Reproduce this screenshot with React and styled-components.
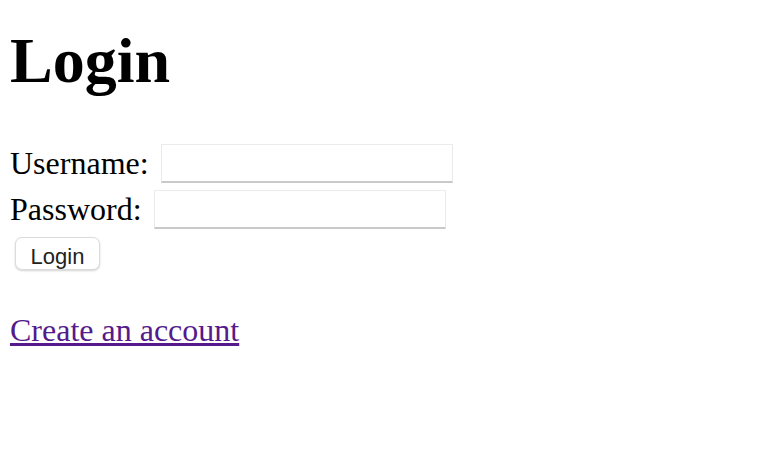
import React from "react";
import styled, { createGlobalStyle } from "styled-components";

const Global = createGlobalStyle`
  html, body { margin: 0; padding: 0; background: #fff; }
  body { font-family: "Liberation Serif", "Times New Roman", serif; color: #000; }
`;

const Page = styled.div`
  padding: 0 10px;
`;

const Title = styled.h1`
  margin: 24px 0 0;
  font-size: 64px;
  line-height: 74px;
  font-weight: bold;
`;

const Form = styled.form`
  margin-top: 46px;
  display: flex;
  flex-direction: column;
  align-items: flex-start;
`;

const Row = styled.div`
  display: flex;
  align-items: center;
  gap: 12.5px;
  margin-bottom: ${(p) => p.$mb}px;
`;

const Label = styled.label`
  font-size: 32px;
  line-height: 37px;
`;

const Input = styled.input`
  box-sizing: border-box;
  width: 292px;
  height: 39px;
  border: 1px solid #ebebeb;
  border-bottom: 2px solid #c9c9c9;
  background: #fff;
  padding: 0 6px;
  font-size: 22px;
  outline: none;
`;

const Button = styled.button`
  box-sizing: border-box;
  margin-left: 5px;
  width: 85px;
  height: 33px;
  border: 1px solid #dcdcdc;
  border-radius: 7px;
  background: #fff;
  box-shadow: 0 1px 2px rgba(0, 0, 0, 0.18);
  font-family: "Liberation Sans", Arial, sans-serif;
  font-size: 22px;
  color: #222;
  padding: 5px 0 0;
  line-height: 25px;
`;

const Link = styled.a`
  display: inline-block;
  margin-top: 42px;
  font-size: 32px;
  line-height: 37px;
  color: #551a8b;
  text-decoration: underline;
`;

export default function App() {
  return (
    <>
      <Global />
      <Page>
        <Title>Login</Title>
        <Form onSubmit={(e) => e.preventDefault()}>
          <Row $mb={7}>
            <Label htmlFor="u">Username:</Label>
            <Input id="u" type="text" />
          </Row>
          <Row $mb={8}>
            <Label htmlFor="p">Password:</Label>
            <Input id="p" type="password" />
          </Row>
          <Button type="submit">Login</Button>
        </Form>
        <Link href="#">Create an account</Link>
      </Page>
    </>
  );
}
